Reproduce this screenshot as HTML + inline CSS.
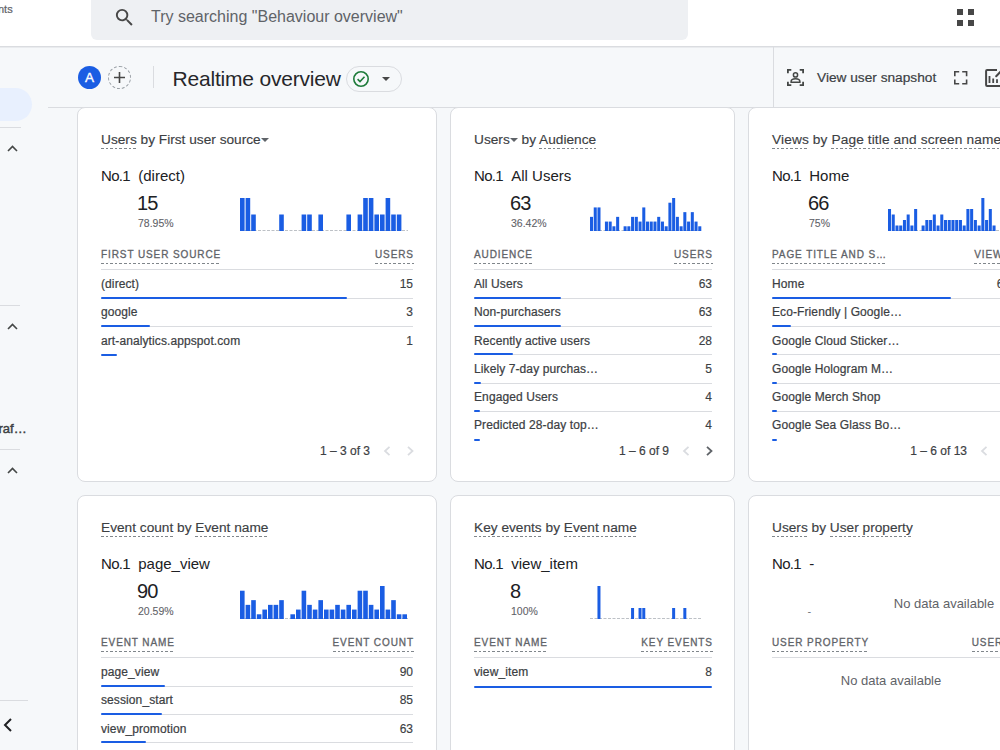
<!DOCTYPE html><html><head><meta charset="utf-8"><style>
html,body{margin:0;padding:0;width:1000px;height:750px;overflow:hidden;background:#f6f8fa;font-family:"Liberation Sans", sans-serif;position:relative}
.u{background-image:repeating-linear-gradient(90deg,#80868b 0 2.6px,transparent 2.6px 4.6px);background-size:100% 1px;background-repeat:no-repeat;background-position:0 100%;padding-bottom:2px}
.h .u{padding-bottom:3px}
</style></head><body>
<div style="position:absolute;left:0px;top:0px;width:1000px;height:46px;background:#ffffff;"></div>
<div style="position:absolute;left:0px;top:46px;width:1000px;height:1px;background:#dadce0;"></div>
<div style="position:absolute;left:0px;top:47px;width:1000px;height:1px;background:#e9ebee;"></div>
<div style="position:absolute;left:91px;top:-10px;width:597px;height:50px;background:#eef0f3;border-radius:6px"></div>
<svg style="position:absolute;left:113px;top:6px" width="23" height="23" viewBox="0 0 24 24"><path fill="#474747" d="M15.5 14h-.79l-.28-.27A6.47 6.47 0 0 0 16 9.5 6.5 6.5 0 1 0 9.5 16c1.61 0 3.09-.59 4.23-1.57l.27.28v.79l5 4.99L20.49 19l-4.99-5zm-6 0C7.01 14 5 11.99 5 9.5S7.01 5 9.5 5 14 7.01 14 9.5 11.99 14 9.5 14z"/></svg>
<div style="position:absolute;left:151px;top:8.79px;font-size:16px;line-height:16px;color:#5f6368;font-weight:400;white-space:nowrap;">Try searching "Behaviour overview"</div>
<div style="position:absolute;left:957px;top:9px;width:6px;height:6px;background:#474747;"></div>
<div style="position:absolute;left:968px;top:9px;width:6px;height:6px;background:#474747;"></div>
<div style="position:absolute;left:957px;top:20px;width:6px;height:6px;background:#474747;"></div>
<div style="position:absolute;left:968px;top:20px;width:6px;height:6px;background:#474747;"></div>
<div style="position:absolute;left:-2px;top:3.70px;font-size:11px;line-height:11px;color:#5f6368;font-weight:400;white-space:nowrap;-webkit-text-stroke:0.22px currentColor">nts</div>
<div style="position:absolute;left:0px;top:88px;width:32px;height:33px;background:#e8f0fe;border-radius:0 17px 17px 0"></div>
<div style="position:absolute;left:0px;top:127px;width:21px;height:1px;background:#dadce0;"></div>
<div style="position:absolute;left:0px;top:305px;width:20px;height:1px;background:#dadce0;"></div>
<div style="position:absolute;left:0px;top:449px;width:20px;height:1px;background:#dadce0;"></div>
<div style="position:absolute;left:0px;top:700px;width:28px;height:1px;background:#dadce0;"></div>
<svg style="position:absolute;left:6.5px;top:144.7px" width="11" height="7" viewBox="0 0 11 7"><path d="M1 6 L5.5 1.5 L10 6" fill="none" stroke="#444746" stroke-width="1.6"/></svg>
<svg style="position:absolute;left:6.5px;top:322.7px" width="11" height="7" viewBox="0 0 11 7"><path d="M1 6 L5.5 1.5 L10 6" fill="none" stroke="#444746" stroke-width="1.6"/></svg>
<svg style="position:absolute;left:6.5px;top:466.9px" width="11" height="7" viewBox="0 0 11 7"><path d="M1 6 L5.5 1.5 L10 6" fill="none" stroke="#444746" stroke-width="1.6"/></svg>
<svg style="position:absolute;left:1px;top:717px" width="12" height="16" viewBox="0 0 12 16"><path d="M10 2 L4 8 L10 14" fill="none" stroke="#202124" stroke-width="2"/></svg>
<div style="position:absolute;left:-1.5px;top:421.53px;font-size:13px;line-height:13px;color:#3c4043;font-weight:400;white-space:nowrap;-webkit-text-stroke:0.45px currentColor">raf…</div>
<div style="position:absolute;left:48px;top:107px;width:952px;height:1px;background:#dadce0;"></div>
<div style="position:absolute;left:773px;top:47px;width:1px;height:60px;background:#dadce0;"></div>
<div style="position:absolute;left:78px;top:66px;width:23px;height:23px;border-radius:50%;background:#1a5de3;color:#fff;font-size:13.5px;line-height:23px;text-align:center;font-weight:400;-webkit-text-stroke:0.35px #fff">A</div>
<div style="position:absolute;left:108px;top:66px;width:21px;height:21px;border-radius:50%;border:1px dashed #9aa0a6"></div>
<svg style="position:absolute;left:112px;top:70px" width="15" height="15" viewBox="0 0 15 15"><path d="M7.5 2v11M2 7.5h11" stroke="#474747" stroke-width="1.6"/></svg>
<div style="position:absolute;left:153px;top:66px;width:1px;height:22px;background:#dadce0;"></div>
<div style="position:absolute;left:172.5px;top:68.28px;font-size:21px;line-height:21px;color:#26272a;font-weight:400;white-space:nowrap;letter-spacing:-0.2px">Realtime overview</div>
<div style="position:absolute;left:346px;top:66px;width:54px;height:24px;border-radius:13px;border:1px solid #dadce0"></div>
<svg style="position:absolute;left:352px;top:70px" width="18" height="18" viewBox="0 0 18 18"><circle cx="9" cy="9" r="7.2" fill="none" stroke="#1e7b3a" stroke-width="1.6"/><path d="M5.6 9.2 L8 11.5 L12.5 6.8" fill="none" stroke="#1e7b3a" stroke-width="1.6"/></svg>
<svg style="position:absolute;left:381.5px;top:77px" width="8" height="4" viewBox="0 0 8 4"><path d="M0 0 L8 0 L4 4z" fill="#474747"/></svg>
<svg style="position:absolute;left:787px;top:69px" width="17" height="17" viewBox="0 0 17 17"><path d="M0.9 4.3V0.9h3.4M12.7 0.9h3.4v3.4M16.1 12.7v3.4h-3.4M4.3 16.1H0.9v-3.4" fill="none" stroke="#444746" stroke-width="1.8"/><circle cx="8.5" cy="5.9" r="2.1" fill="none" stroke="#444746" stroke-width="1.5"/><path d="M4.1 12.6c0-1.8 2.1-2.9 4.4-2.9s4.4 1.1 4.4 2.9v0.6h-8.8z" fill="none" stroke="#444746" stroke-width="1.5"/></svg>
<div style="position:absolute;left:817px;top:70.90px;font-size:13.7px;line-height:13.7px;color:#3c4043;font-weight:400;white-space:nowrap;-webkit-text-stroke:0.2px currentColor">View user snapshot</div>
<svg style="position:absolute;left:954px;top:70.5px" width="14" height="14" viewBox="0 0 14 14"><path d="M0.8 5.2V0.8H5.2M8.2 0.8H12.6V5.2M12.6 8.4V12.8H8.2M5.2 12.8H0.8V8.4" fill="none" stroke="#474747" stroke-width="1.6"/></svg>
<svg style="position:absolute;left:985px;top:69px" width="16" height="18" viewBox="0 0 16 18"><path d="M12 1.1H2.1Q1.1 1.1 1.1 2.1V15.9Q1.1 16.9 2.1 16.9H16" fill="none" stroke="#474747" stroke-width="2"/><path d="M4.5 14V7M8.2 14V9.6M12 14V10.2" stroke="#474747" stroke-width="1.8"/><path d="M11.2 7.2L16 2.2" stroke="#474747" stroke-width="2" stroke-linecap="round"/></svg>
<div style="position:absolute;left:77px;top:107px;width:358px;height:373px;background:#fff;border:1px solid #dadce0;border-radius:8px"></div>
<div style="position:absolute;left:101px;top:132.70px;font-size:13.7px;line-height:13.7px;color:#3c4043;font-weight:400;white-space:nowrap;-webkit-text-stroke:0.15px currentColor"><span class="u">Users</span> by First user source<span style="display:inline-block;border-left:4px solid transparent;border-right:4px solid transparent;border-top:4px solid #5f6368;margin-left:0;vertical-align:middle;position:relative;top:-0.3px"></span></div>
<div style="position:absolute;left:101px;top:167.97px;font-size:15px;line-height:15px;color:#202124;font-weight:400;white-space:nowrap;"><span style="letter-spacing:-0.7px">No.1</span>&nbsp;&nbsp;(direct)</div>
<div style="position:absolute;left:137px;top:192.66px;font-size:20px;line-height:20px;color:#202124;font-weight:400;white-space:nowrap;letter-spacing:-0.8px">15</div>
<div style="position:absolute;left:138px;top:217.94px;font-size:10.5px;line-height:10.5px;color:#5f6368;font-weight:400;white-space:nowrap;-webkit-text-stroke:0.1px currentColor">78.95%</div>
<svg style="position:absolute;left:240px;top:196px" width="170" height="36" viewBox="0 0 170 36"><line x1="0" y1="34.5" x2="168" y2="34.5" stroke="#bdc1c6" stroke-width="1" stroke-dasharray="3 1.5"/><g fill="#1a5de3"><rect x="0.00" y="2.00" width="4.60" height="33.00"/><rect x="5.60" y="2.00" width="4.60" height="33.00"/><rect x="11.20" y="18.50" width="4.60" height="16.50"/><rect x="39.20" y="18.50" width="4.60" height="16.50"/><rect x="61.60" y="18.50" width="4.60" height="16.50"/><rect x="67.20" y="18.50" width="4.60" height="16.50"/><rect x="78.40" y="18.50" width="4.60" height="16.50"/><rect x="106.40" y="18.50" width="4.60" height="16.50"/><rect x="117.60" y="18.50" width="4.60" height="16.50"/><rect x="123.20" y="2.00" width="4.60" height="33.00"/><rect x="128.80" y="2.00" width="4.60" height="33.00"/><rect x="134.40" y="18.50" width="4.60" height="16.50"/><rect x="140.00" y="18.50" width="4.60" height="16.50"/><rect x="145.60" y="2.00" width="4.60" height="33.00"/><rect x="151.20" y="18.50" width="4.60" height="16.50"/><rect x="156.80" y="18.50" width="4.60" height="16.50"/></g></svg>
<div style="position:absolute;right:630px;top:445.22px;font-size:12px;line-height:12px;color:#3c4043;font-weight:400;white-space:nowrap;-webkit-text-stroke:0.2px currentColor">1 – 3 of 3</div>
<svg style="position:absolute;left:383px;top:446px" width="8" height="10" viewBox="0 0 8 10"><path d="M6.5 0.8 L2 5 L6.5 9.2" fill="none" stroke="#dadce0" stroke-width="1.8"/></svg>
<svg style="position:absolute;left:407px;top:446px" width="8" height="10" viewBox="0 0 8 10"><path d="M1 0.8 L5.5 5 L1 9.2" fill="none" stroke="#dadce0" stroke-width="1.8"/></svg>
<div style="position:absolute;left:101px;top:250.18px;font-size:10px;line-height:10px;color:#5f6368;font-weight:400;white-space:nowrap;letter-spacing:0.9px;-webkit-text-stroke:0.3px currentColor"><span class="u" style="padding-bottom:4px">FIRST USER SOURCE</span></div>
<div style="position:absolute;right:586.1px;top:250.18px;font-size:10px;line-height:10px;color:#5f6368;font-weight:400;white-space:nowrap;letter-spacing:0.9px;-webkit-text-stroke:0.3px currentColor"><span class="u" style="padding-bottom:4px">USERS</span></div>
<div style="position:absolute;left:101px;top:269px;width:312px;height:1px;background:#dadce0;"></div>
<div style="position:absolute;left:101px;top:278.22px;font-size:12px;line-height:12px;color:#3c4043;font-weight:400;white-space:nowrap;-webkit-text-stroke:0.22px currentColor;letter-spacing:0.1px">(direct)</div>
<div style="position:absolute;right:587px;top:278.22px;font-size:12px;line-height:12px;color:#3c4043;font-weight:400;white-space:nowrap;-webkit-text-stroke:0.15px currentColor">15</div>
<div style="position:absolute;left:101px;top:298.0px;width:312px;height:1px;background:#dadce0;"></div>
<div style="position:absolute;left:101px;top:297.0px;width:246.31578947368422px;height:2px;background:#1a5de3;border-radius:1px"></div>
<div style="position:absolute;left:101px;top:306.42px;font-size:12px;line-height:12px;color:#3c4043;font-weight:400;white-space:nowrap;-webkit-text-stroke:0.22px currentColor;letter-spacing:0.1px">google</div>
<div style="position:absolute;right:587px;top:306.42px;font-size:12px;line-height:12px;color:#3c4043;font-weight:400;white-space:nowrap;-webkit-text-stroke:0.15px currentColor">3</div>
<div style="position:absolute;left:101px;top:326.2px;width:312px;height:1px;background:#dadce0;"></div>
<div style="position:absolute;left:101px;top:325.2px;width:49.26315789473684px;height:2px;background:#1a5de3;border-radius:1px"></div>
<div style="position:absolute;left:101px;top:334.62px;font-size:12px;line-height:12px;color:#3c4043;font-weight:400;white-space:nowrap;-webkit-text-stroke:0.22px currentColor;letter-spacing:0.1px">art-analytics.appspot.com</div>
<div style="position:absolute;right:587px;top:334.62px;font-size:12px;line-height:12px;color:#3c4043;font-weight:400;white-space:nowrap;-webkit-text-stroke:0.15px currentColor">1</div>
<div style="position:absolute;left:101px;top:354.4px;width:16.421052631578945px;height:2px;background:#1a5de3;border-radius:1px"></div>
<div style="position:absolute;left:450px;top:107px;width:283px;height:373px;background:#fff;border:1px solid #dadce0;border-radius:8px"></div>
<div style="position:absolute;left:474px;top:132.70px;font-size:13.7px;line-height:13.7px;color:#3c4043;font-weight:400;white-space:nowrap;-webkit-text-stroke:0.15px currentColor">Users<span style="display:inline-block;border-left:4px solid transparent;border-right:4px solid transparent;border-top:4px solid #5f6368;margin-left:0;vertical-align:middle;position:relative;top:-0.3px"></span> by <span class="u">Audience</span></div>
<div style="position:absolute;left:474px;top:167.97px;font-size:15px;line-height:15px;color:#202124;font-weight:400;white-space:nowrap;"><span style="letter-spacing:-0.7px">No.1</span>&nbsp;&nbsp;All Users</div>
<div style="position:absolute;left:510px;top:192.66px;font-size:20px;line-height:20px;color:#202124;font-weight:400;white-space:nowrap;letter-spacing:-0.8px">63</div>
<div style="position:absolute;left:511px;top:217.94px;font-size:10.5px;line-height:10.5px;color:#5f6368;font-weight:400;white-space:nowrap;-webkit-text-stroke:0.1px currentColor">36.42%</div>
<svg style="position:absolute;left:590px;top:196px" width="114" height="36" viewBox="0 0 114 36"><line x1="0" y1="34.5" x2="112" y2="34.5" stroke="#bdc1c6" stroke-width="1" stroke-dasharray="3 1.5"/><g fill="#1a5de3"><rect x="0.00" y="20.86" width="3.03" height="14.14"/><rect x="3.73" y="11.43" width="3.03" height="23.57"/><rect x="7.47" y="11.43" width="3.03" height="23.57"/><rect x="14.93" y="25.57" width="3.03" height="9.43"/><rect x="18.67" y="25.57" width="3.03" height="9.43"/><rect x="22.40" y="30.29" width="3.03" height="4.71"/><rect x="26.13" y="20.86" width="3.03" height="14.14"/><rect x="33.60" y="30.29" width="3.03" height="4.71"/><rect x="37.33" y="30.29" width="3.03" height="4.71"/><rect x="41.07" y="20.86" width="3.03" height="14.14"/><rect x="44.80" y="20.86" width="3.03" height="14.14"/><rect x="48.53" y="25.57" width="3.03" height="9.43"/><rect x="52.27" y="11.43" width="3.03" height="23.57"/><rect x="56.00" y="25.57" width="3.03" height="9.43"/><rect x="59.73" y="25.57" width="3.03" height="9.43"/><rect x="63.47" y="25.57" width="3.03" height="9.43"/><rect x="67.20" y="20.86" width="3.03" height="14.14"/><rect x="70.93" y="25.57" width="3.03" height="9.43"/><rect x="74.67" y="30.29" width="3.03" height="4.71"/><rect x="78.40" y="6.71" width="3.03" height="28.29"/><rect x="82.13" y="2.00" width="3.03" height="33.00"/><rect x="85.87" y="20.86" width="3.03" height="14.14"/><rect x="89.60" y="30.29" width="3.03" height="4.71"/><rect x="93.33" y="16.14" width="3.03" height="18.86"/><rect x="97.07" y="25.57" width="3.03" height="9.43"/><rect x="100.80" y="16.14" width="3.03" height="18.86"/><rect x="104.53" y="25.57" width="3.03" height="9.43"/><rect x="108.27" y="30.29" width="3.03" height="4.71"/></g></svg>
<div style="position:absolute;right:331px;top:445.22px;font-size:12px;line-height:12px;color:#3c4043;font-weight:400;white-space:nowrap;-webkit-text-stroke:0.2px currentColor">1 – 6 of 9</div>
<svg style="position:absolute;left:682px;top:446px" width="8" height="10" viewBox="0 0 8 10"><path d="M6.5 0.8 L2 5 L6.5 9.2" fill="none" stroke="#dadce0" stroke-width="1.8"/></svg>
<svg style="position:absolute;left:706px;top:446px" width="8" height="10" viewBox="0 0 8 10"><path d="M1 0.8 L5.5 5 L1 9.2" fill="none" stroke="#5f6368" stroke-width="1.8"/></svg>
<div style="position:absolute;left:474px;top:250.18px;font-size:10px;line-height:10px;color:#5f6368;font-weight:400;white-space:nowrap;letter-spacing:0.9px;-webkit-text-stroke:0.3px currentColor"><span class="u" style="padding-bottom:4px">AUDIENCE</span></div>
<div style="position:absolute;right:287.1px;top:250.18px;font-size:10px;line-height:10px;color:#5f6368;font-weight:400;white-space:nowrap;letter-spacing:0.9px;-webkit-text-stroke:0.3px currentColor"><span class="u" style="padding-bottom:4px">USERS</span></div>
<div style="position:absolute;left:474px;top:269px;width:238px;height:1px;background:#dadce0;"></div>
<div style="position:absolute;left:474px;top:278.22px;font-size:12px;line-height:12px;color:#3c4043;font-weight:400;white-space:nowrap;-webkit-text-stroke:0.22px currentColor;letter-spacing:0.1px">All Users</div>
<div style="position:absolute;right:288px;top:278.22px;font-size:12px;line-height:12px;color:#3c4043;font-weight:400;white-space:nowrap;-webkit-text-stroke:0.15px currentColor">63</div>
<div style="position:absolute;left:474px;top:298.0px;width:238px;height:1px;background:#dadce0;"></div>
<div style="position:absolute;left:474px;top:297.0px;width:86.67052023121387px;height:2px;background:#1a5de3;border-radius:1px"></div>
<div style="position:absolute;left:474px;top:306.42px;font-size:12px;line-height:12px;color:#3c4043;font-weight:400;white-space:nowrap;-webkit-text-stroke:0.22px currentColor;letter-spacing:0.1px">Non-purchasers</div>
<div style="position:absolute;right:288px;top:306.42px;font-size:12px;line-height:12px;color:#3c4043;font-weight:400;white-space:nowrap;-webkit-text-stroke:0.15px currentColor">63</div>
<div style="position:absolute;left:474px;top:326.2px;width:238px;height:1px;background:#dadce0;"></div>
<div style="position:absolute;left:474px;top:325.2px;width:86.67052023121387px;height:2px;background:#1a5de3;border-radius:1px"></div>
<div style="position:absolute;left:474px;top:334.62px;font-size:12px;line-height:12px;color:#3c4043;font-weight:400;white-space:nowrap;-webkit-text-stroke:0.22px currentColor;letter-spacing:0.1px">Recently active users</div>
<div style="position:absolute;right:288px;top:334.62px;font-size:12px;line-height:12px;color:#3c4043;font-weight:400;white-space:nowrap;-webkit-text-stroke:0.15px currentColor">28</div>
<div style="position:absolute;left:474px;top:354.4px;width:238px;height:1px;background:#dadce0;"></div>
<div style="position:absolute;left:474px;top:353.4px;width:38.52023121387283px;height:2px;background:#1a5de3;border-radius:1px"></div>
<div style="position:absolute;left:474px;top:362.82px;font-size:12px;line-height:12px;color:#3c4043;font-weight:400;white-space:nowrap;-webkit-text-stroke:0.22px currentColor;letter-spacing:0.1px">Likely 7-day purchas…</div>
<div style="position:absolute;right:288px;top:362.82px;font-size:12px;line-height:12px;color:#3c4043;font-weight:400;white-space:nowrap;-webkit-text-stroke:0.15px currentColor">5</div>
<div style="position:absolute;left:474px;top:382.6px;width:238px;height:1px;background:#dadce0;"></div>
<div style="position:absolute;left:474px;top:381.6px;width:6.878612716763006px;height:2px;background:#1a5de3;border-radius:1px"></div>
<div style="position:absolute;left:474px;top:391.02px;font-size:12px;line-height:12px;color:#3c4043;font-weight:400;white-space:nowrap;-webkit-text-stroke:0.22px currentColor;letter-spacing:0.1px">Engaged Users</div>
<div style="position:absolute;right:288px;top:391.02px;font-size:12px;line-height:12px;color:#3c4043;font-weight:400;white-space:nowrap;-webkit-text-stroke:0.15px currentColor">4</div>
<div style="position:absolute;left:474px;top:410.8px;width:238px;height:1px;background:#dadce0;"></div>
<div style="position:absolute;left:474px;top:409.8px;width:5.502890173410404px;height:2px;background:#1a5de3;border-radius:1px"></div>
<div style="position:absolute;left:474px;top:419.22px;font-size:12px;line-height:12px;color:#3c4043;font-weight:400;white-space:nowrap;-webkit-text-stroke:0.22px currentColor;letter-spacing:0.1px">Predicted 28-day top…</div>
<div style="position:absolute;right:288px;top:419.22px;font-size:12px;line-height:12px;color:#3c4043;font-weight:400;white-space:nowrap;-webkit-text-stroke:0.15px currentColor">4</div>
<div style="position:absolute;left:474px;top:439.0px;width:5.502890173410404px;height:2px;background:#1a5de3;border-radius:1px"></div>
<div style="position:absolute;left:748px;top:107px;width:283px;height:373px;background:#fff;border:1px solid #dadce0;border-radius:8px"></div>
<div style="position:absolute;left:772px;top:132.70px;font-size:13.7px;line-height:13.7px;color:#3c4043;font-weight:400;white-space:nowrap;-webkit-text-stroke:0.15px currentColor"><span style="letter-spacing:0.12px"><span class="u">Views</span> by <span class="u">Page title and screen name</span></span></div>
<div style="position:absolute;left:772px;top:167.97px;font-size:15px;line-height:15px;color:#202124;font-weight:400;white-space:nowrap;"><span style="letter-spacing:-0.7px">No.1</span>&nbsp;&nbsp;Home</div>
<div style="position:absolute;left:808px;top:192.66px;font-size:20px;line-height:20px;color:#202124;font-weight:400;white-space:nowrap;letter-spacing:-0.8px">66</div>
<div style="position:absolute;left:809px;top:217.94px;font-size:10.5px;line-height:10.5px;color:#5f6368;font-weight:400;white-space:nowrap;-webkit-text-stroke:0.1px currentColor">75%</div>
<svg style="position:absolute;left:888px;top:196px" width="114" height="36" viewBox="0 0 114 36"><line x1="0" y1="34.5" x2="112" y2="34.5" stroke="#bdc1c6" stroke-width="1" stroke-dasharray="3 1.5"/><g fill="#1a5de3"><rect x="0.00" y="13.00" width="3.03" height="22.00"/><rect x="3.73" y="18.50" width="3.03" height="16.50"/><rect x="7.47" y="29.50" width="3.03" height="5.50"/><rect x="11.20" y="29.50" width="3.03" height="5.50"/><rect x="14.93" y="24.00" width="3.03" height="11.00"/><rect x="18.67" y="18.50" width="3.03" height="16.50"/><rect x="22.40" y="29.50" width="3.03" height="5.50"/><rect x="26.13" y="13.00" width="3.03" height="22.00"/><rect x="33.60" y="29.50" width="3.03" height="5.50"/><rect x="37.33" y="24.00" width="3.03" height="11.00"/><rect x="41.07" y="24.00" width="3.03" height="11.00"/><rect x="44.80" y="18.50" width="3.03" height="16.50"/><rect x="48.53" y="29.50" width="3.03" height="5.50"/><rect x="52.27" y="18.50" width="3.03" height="16.50"/><rect x="56.00" y="24.00" width="3.03" height="11.00"/><rect x="59.73" y="24.00" width="3.03" height="11.00"/><rect x="63.47" y="24.00" width="3.03" height="11.00"/><rect x="67.20" y="24.00" width="3.03" height="11.00"/><rect x="70.93" y="24.00" width="3.03" height="11.00"/><rect x="74.67" y="29.50" width="3.03" height="5.50"/><rect x="78.40" y="13.00" width="3.03" height="22.00"/><rect x="82.13" y="13.00" width="3.03" height="22.00"/><rect x="85.87" y="24.00" width="3.03" height="11.00"/><rect x="89.60" y="29.50" width="3.03" height="5.50"/><rect x="93.33" y="2.00" width="3.03" height="33.00"/><rect x="97.07" y="24.00" width="3.03" height="11.00"/><rect x="100.80" y="13.00" width="3.03" height="22.00"/><rect x="104.53" y="29.50" width="3.03" height="5.50"/></g></svg>
<div style="position:absolute;right:33px;top:445.22px;font-size:12px;line-height:12px;color:#3c4043;font-weight:400;white-space:nowrap;-webkit-text-stroke:0.2px currentColor">1 – 6 of 13</div>
<svg style="position:absolute;left:980px;top:446px" width="8" height="10" viewBox="0 0 8 10"><path d="M6.5 0.8 L2 5 L6.5 9.2" fill="none" stroke="#dadce0" stroke-width="1.8"/></svg>
<svg style="position:absolute;left:1004px;top:446px" width="8" height="10" viewBox="0 0 8 10"><path d="M1 0.8 L5.5 5 L1 9.2" fill="none" stroke="#5f6368" stroke-width="1.8"/></svg>
<div style="position:absolute;left:772px;top:250.18px;font-size:10px;line-height:10px;color:#5f6368;font-weight:400;white-space:nowrap;letter-spacing:0.9px;-webkit-text-stroke:0.3px currentColor"><span class="u" style="padding-bottom:4px">PAGE TITLE AND S…</span></div>
<div style="position:absolute;right:-10.899999999999977px;top:250.18px;font-size:10px;line-height:10px;color:#5f6368;font-weight:400;white-space:nowrap;letter-spacing:0.9px;-webkit-text-stroke:0.3px currentColor"><span class="u" style="padding-bottom:4px">VIEWS</span></div>
<div style="position:absolute;left:772px;top:269px;width:238px;height:1px;background:#dadce0;"></div>
<div style="position:absolute;left:772px;top:278.22px;font-size:12px;line-height:12px;color:#3c4043;font-weight:400;white-space:nowrap;-webkit-text-stroke:0.22px currentColor;letter-spacing:0.1px">Home</div>
<div style="position:absolute;right:-10px;top:278.22px;font-size:12px;line-height:12px;color:#3c4043;font-weight:400;white-space:nowrap;-webkit-text-stroke:0.15px currentColor">66</div>
<div style="position:absolute;left:772px;top:298.0px;width:238px;height:1px;background:#dadce0;"></div>
<div style="position:absolute;left:772px;top:297.0px;width:178.5px;height:2px;background:#1a5de3;border-radius:1px"></div>
<div style="position:absolute;left:772px;top:306.42px;font-size:12px;line-height:12px;color:#3c4043;font-weight:400;white-space:nowrap;-webkit-text-stroke:0.22px currentColor;letter-spacing:0.1px">Eco-Friendly | Google…</div>
<div style="position:absolute;right:-10px;top:306.42px;font-size:12px;line-height:12px;color:#3c4043;font-weight:400;white-space:nowrap;-webkit-text-stroke:0.15px currentColor">7</div>
<div style="position:absolute;left:772px;top:326.2px;width:238px;height:1px;background:#dadce0;"></div>
<div style="position:absolute;left:772px;top:325.2px;width:18.93181818181818px;height:2px;background:#1a5de3;border-radius:1px"></div>
<div style="position:absolute;left:772px;top:334.62px;font-size:12px;line-height:12px;color:#3c4043;font-weight:400;white-space:nowrap;-webkit-text-stroke:0.22px currentColor;letter-spacing:0.1px">Google Cloud Sticker…</div>
<div style="position:absolute;right:-10px;top:334.62px;font-size:12px;line-height:12px;color:#3c4043;font-weight:400;white-space:nowrap;-webkit-text-stroke:0.15px currentColor">2</div>
<div style="position:absolute;left:772px;top:354.4px;width:238px;height:1px;background:#dadce0;"></div>
<div style="position:absolute;left:772px;top:353.4px;width:5.409090909090909px;height:2px;background:#1a5de3;border-radius:1px"></div>
<div style="position:absolute;left:772px;top:362.82px;font-size:12px;line-height:12px;color:#3c4043;font-weight:400;white-space:nowrap;-webkit-text-stroke:0.22px currentColor;letter-spacing:0.1px">Google Hologram M…</div>
<div style="position:absolute;right:-10px;top:362.82px;font-size:12px;line-height:12px;color:#3c4043;font-weight:400;white-space:nowrap;-webkit-text-stroke:0.15px currentColor">2</div>
<div style="position:absolute;left:772px;top:382.6px;width:238px;height:1px;background:#dadce0;"></div>
<div style="position:absolute;left:772px;top:381.6px;width:5.409090909090909px;height:2px;background:#1a5de3;border-radius:1px"></div>
<div style="position:absolute;left:772px;top:391.02px;font-size:12px;line-height:12px;color:#3c4043;font-weight:400;white-space:nowrap;-webkit-text-stroke:0.22px currentColor;letter-spacing:0.1px">Google Merch Shop</div>
<div style="position:absolute;right:-10px;top:391.02px;font-size:12px;line-height:12px;color:#3c4043;font-weight:400;white-space:nowrap;-webkit-text-stroke:0.15px currentColor">2</div>
<div style="position:absolute;left:772px;top:410.8px;width:238px;height:1px;background:#dadce0;"></div>
<div style="position:absolute;left:772px;top:409.8px;width:5.409090909090909px;height:2px;background:#1a5de3;border-radius:1px"></div>
<div style="position:absolute;left:772px;top:419.22px;font-size:12px;line-height:12px;color:#3c4043;font-weight:400;white-space:nowrap;-webkit-text-stroke:0.22px currentColor;letter-spacing:0.1px">Google Sea Glass Bo…</div>
<div style="position:absolute;right:-10px;top:419.22px;font-size:12px;line-height:12px;color:#3c4043;font-weight:400;white-space:nowrap;-webkit-text-stroke:0.15px currentColor">2</div>
<div style="position:absolute;left:772px;top:439.0px;width:5.409090909090909px;height:2px;background:#1a5de3;border-radius:1px"></div>
<div style="position:absolute;left:77px;top:495px;width:358px;height:373px;background:#fff;border:1px solid #dadce0;border-radius:8px"></div>
<div style="position:absolute;left:101px;top:520.70px;font-size:13.7px;line-height:13.7px;color:#3c4043;font-weight:400;white-space:nowrap;-webkit-text-stroke:0.15px currentColor"><span class="u">Event count</span> by <span class="u">Event name</span></div>
<div style="position:absolute;left:101px;top:555.97px;font-size:15px;line-height:15px;color:#202124;font-weight:400;white-space:nowrap;"><span style="letter-spacing:-0.7px">No.1</span>&nbsp;&nbsp;page_view</div>
<div style="position:absolute;left:137px;top:580.66px;font-size:20px;line-height:20px;color:#202124;font-weight:400;white-space:nowrap;letter-spacing:-0.8px">90</div>
<div style="position:absolute;left:138px;top:605.94px;font-size:10.5px;line-height:10.5px;color:#5f6368;font-weight:400;white-space:nowrap;-webkit-text-stroke:0.1px currentColor">20.59%</div>
<svg style="position:absolute;left:240px;top:584px" width="170" height="36" viewBox="0 0 170 36"><line x1="0" y1="34.5" x2="168" y2="34.5" stroke="#bdc1c6" stroke-width="1" stroke-dasharray="3 1.5"/><g fill="#1a5de3"><rect x="0.00" y="6.71" width="4.60" height="28.29"/><rect x="5.60" y="20.86" width="4.60" height="14.14"/><rect x="11.20" y="16.14" width="4.60" height="18.86"/><rect x="16.80" y="30.29" width="4.60" height="4.71"/><rect x="22.40" y="25.57" width="4.60" height="9.43"/><rect x="28.00" y="20.86" width="4.60" height="14.14"/><rect x="33.60" y="20.86" width="4.60" height="14.14"/><rect x="39.20" y="16.14" width="4.60" height="18.86"/><rect x="50.40" y="30.29" width="4.60" height="4.71"/><rect x="56.00" y="25.57" width="4.60" height="9.43"/><rect x="61.60" y="6.71" width="4.60" height="28.29"/><rect x="67.20" y="20.86" width="4.60" height="14.14"/><rect x="72.80" y="25.57" width="4.60" height="9.43"/><rect x="78.40" y="16.14" width="4.60" height="18.86"/><rect x="84.00" y="25.57" width="4.60" height="9.43"/><rect x="89.60" y="25.57" width="4.60" height="9.43"/><rect x="95.20" y="20.86" width="4.60" height="14.14"/><rect x="100.80" y="25.57" width="4.60" height="9.43"/><rect x="106.40" y="20.86" width="4.60" height="14.14"/><rect x="112.00" y="25.57" width="4.60" height="9.43"/><rect x="117.60" y="6.71" width="4.60" height="28.29"/><rect x="123.20" y="6.71" width="4.60" height="28.29"/><rect x="128.80" y="20.86" width="4.60" height="14.14"/><rect x="134.40" y="25.57" width="4.60" height="9.43"/><rect x="140.00" y="2.00" width="4.60" height="33.00"/><rect x="145.60" y="25.57" width="4.60" height="9.43"/><rect x="151.20" y="16.14" width="4.60" height="18.86"/><rect x="156.80" y="30.29" width="4.60" height="4.71"/><rect x="162.40" y="30.29" width="4.60" height="4.71"/></g></svg>
<div style="position:absolute;left:101px;top:638.18px;font-size:10px;line-height:10px;color:#5f6368;font-weight:400;white-space:nowrap;letter-spacing:0.9px;-webkit-text-stroke:0.3px currentColor"><span class="u" style="padding-bottom:4px">EVENT NAME</span></div>
<div style="position:absolute;right:586.1px;top:638.18px;font-size:10px;line-height:10px;color:#5f6368;font-weight:400;white-space:nowrap;letter-spacing:0.9px;-webkit-text-stroke:0.3px currentColor"><span class="u" style="padding-bottom:4px">EVENT COUNT</span></div>
<div style="position:absolute;left:101px;top:657px;width:312px;height:1px;background:#dadce0;"></div>
<div style="position:absolute;left:101px;top:666.22px;font-size:12px;line-height:12px;color:#3c4043;font-weight:400;white-space:nowrap;-webkit-text-stroke:0.22px currentColor;letter-spacing:0.1px">page_view</div>
<div style="position:absolute;right:587px;top:666.22px;font-size:12px;line-height:12px;color:#3c4043;font-weight:400;white-space:nowrap;-webkit-text-stroke:0.15px currentColor">90</div>
<div style="position:absolute;left:101px;top:686.0px;width:312px;height:1px;background:#dadce0;"></div>
<div style="position:absolute;left:101px;top:685.0px;width:64.2408px;height:2px;background:#1a5de3;border-radius:1px"></div>
<div style="position:absolute;left:101px;top:694.42px;font-size:12px;line-height:12px;color:#3c4043;font-weight:400;white-space:nowrap;-webkit-text-stroke:0.22px currentColor;letter-spacing:0.1px">session_start</div>
<div style="position:absolute;right:587px;top:694.42px;font-size:12px;line-height:12px;color:#3c4043;font-weight:400;white-space:nowrap;-webkit-text-stroke:0.15px currentColor">85</div>
<div style="position:absolute;left:101px;top:714.2px;width:312px;height:1px;background:#dadce0;"></div>
<div style="position:absolute;left:101px;top:713.2px;width:60.68649885583525px;height:2px;background:#1a5de3;border-radius:1px"></div>
<div style="position:absolute;left:101px;top:722.62px;font-size:12px;line-height:12px;color:#3c4043;font-weight:400;white-space:nowrap;-webkit-text-stroke:0.22px currentColor;letter-spacing:0.1px">view_promotion</div>
<div style="position:absolute;right:587px;top:722.62px;font-size:12px;line-height:12px;color:#3c4043;font-weight:400;white-space:nowrap;-webkit-text-stroke:0.15px currentColor">63</div>
<div style="position:absolute;left:101px;top:742.4px;width:312px;height:1px;background:#dadce0;"></div>
<div style="position:absolute;left:101px;top:741.4px;width:44.97940503432495px;height:2px;background:#1a5de3;border-radius:1px"></div>
<div style="position:absolute;left:450px;top:495px;width:283px;height:373px;background:#fff;border:1px solid #dadce0;border-radius:8px"></div>
<div style="position:absolute;left:474px;top:520.70px;font-size:13.7px;line-height:13.7px;color:#3c4043;font-weight:400;white-space:nowrap;-webkit-text-stroke:0.15px currentColor"><span class="u">Key events</span> by <span class="u">Event name</span></div>
<div style="position:absolute;left:474px;top:555.97px;font-size:15px;line-height:15px;color:#202124;font-weight:400;white-space:nowrap;"><span style="letter-spacing:-0.7px">No.1</span>&nbsp;&nbsp;view_item</div>
<div style="position:absolute;left:510px;top:580.66px;font-size:20px;line-height:20px;color:#202124;font-weight:400;white-space:nowrap;letter-spacing:-0.8px">8</div>
<div style="position:absolute;left:511px;top:605.94px;font-size:10.5px;line-height:10.5px;color:#5f6368;font-weight:400;white-space:nowrap;-webkit-text-stroke:0.1px currentColor">100%</div>
<svg style="position:absolute;left:590px;top:584px" width="114" height="36" viewBox="0 0 114 36"><line x1="0" y1="34.5" x2="112" y2="34.5" stroke="#bdc1c6" stroke-width="1" stroke-dasharray="3 1.5"/><g fill="#1a5de3"><rect x="7.47" y="2.00" width="3.00" height="33.00"/><rect x="41.07" y="24.00" width="3.00" height="11.00"/><rect x="48.53" y="24.00" width="3.00" height="11.00"/><rect x="52.27" y="24.00" width="3.00" height="11.00"/><rect x="82.13" y="24.00" width="3.00" height="11.00"/><rect x="93.33" y="24.00" width="3.00" height="11.00"/></g></svg>
<div style="position:absolute;left:474px;top:638.18px;font-size:10px;line-height:10px;color:#5f6368;font-weight:400;white-space:nowrap;letter-spacing:0.9px;-webkit-text-stroke:0.3px currentColor"><span class="u" style="padding-bottom:4px">EVENT NAME</span></div>
<div style="position:absolute;right:287.1px;top:638.18px;font-size:10px;line-height:10px;color:#5f6368;font-weight:400;white-space:nowrap;letter-spacing:0.9px;-webkit-text-stroke:0.3px currentColor"><span class="u" style="padding-bottom:4px">KEY EVENTS</span></div>
<div style="position:absolute;left:474px;top:657px;width:238px;height:1px;background:#dadce0;"></div>
<div style="position:absolute;left:474px;top:666.22px;font-size:12px;line-height:12px;color:#3c4043;font-weight:400;white-space:nowrap;-webkit-text-stroke:0.22px currentColor;letter-spacing:0.1px">view_item</div>
<div style="position:absolute;right:288px;top:666.22px;font-size:12px;line-height:12px;color:#3c4043;font-weight:400;white-space:nowrap;-webkit-text-stroke:0.15px currentColor">8</div>
<div style="position:absolute;left:474px;top:686.0px;width:238.0px;height:2px;background:#1a5de3;border-radius:1px"></div>
<div style="position:absolute;left:748px;top:495px;width:283px;height:373px;background:#fff;border:1px solid #dadce0;border-radius:8px"></div>
<div style="position:absolute;left:772px;top:520.70px;font-size:13.7px;line-height:13.7px;color:#3c4043;font-weight:400;white-space:nowrap;-webkit-text-stroke:0.15px currentColor"><span class="u">Users</span> by <span class="u">User property</span></div>
<div style="position:absolute;left:772px;top:555.97px;font-size:15px;line-height:15px;color:#202124;font-weight:400;white-space:nowrap;"><span style="letter-spacing:-0.7px">No.1</span>&nbsp;&nbsp;-</div>
<div style="position:absolute;left:807.5px;top:605.70px;font-size:11px;line-height:11px;color:#70757a;font-weight:400;white-space:nowrap;">-</div>
<div style="position:absolute;left:744px;width:400px;text-align:center;top:596.73px;font-size:13px;line-height:13px;color:#5f6368;font-weight:400;white-space:nowrap;">No data available</div>
<div style="position:absolute;left:772px;top:638.18px;font-size:10px;line-height:10px;color:#5f6368;font-weight:400;white-space:nowrap;letter-spacing:0.9px;-webkit-text-stroke:0.3px currentColor"><span class="u" style="padding-bottom:4px">USER PROPERTY</span></div>
<div style="position:absolute;left:971.7px;top:638.18px;font-size:10px;line-height:10px;color:#5f6368;font-weight:400;white-space:nowrap;letter-spacing:0.9px;-webkit-text-stroke:0.3px currentColor"><span class="u" style="padding-bottom:4px">USERS</span></div>
<div style="position:absolute;left:772px;top:657px;width:237px;height:1px;background:#dadce0;"></div>
<div style="position:absolute;left:691px;width:400px;text-align:center;top:673.73px;font-size:13px;line-height:13px;color:#5f6368;font-weight:400;white-space:nowrap;">No data available</div>
</body></html>
